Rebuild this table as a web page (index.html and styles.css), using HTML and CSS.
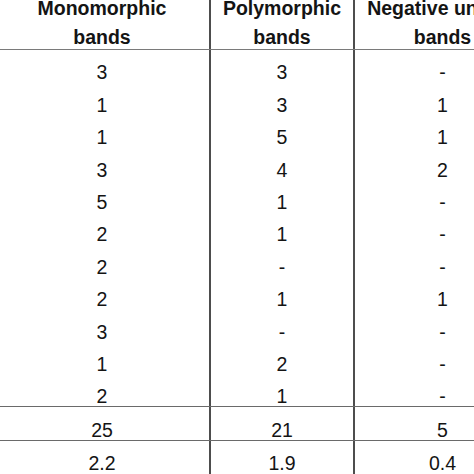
FILE: index.html
```html
<!DOCTYPE html>
<html>
<head>
<meta charset="utf-8">
<link rel="stylesheet" href="styles.css">
</head>
<body>
<div class="table">
  <div class="row head">
    <div class="cell">Monomorphic<br>bands</div>
    <div class="cell">Polymorphic<br>bands</div>
    <div class="cell">Negative unique<br>bands</div>
  </div>
  <div class="body">
    <div class="row"><div class="cell">3</div><div class="cell">3</div><div class="cell">-</div></div>
    <div class="row"><div class="cell">1</div><div class="cell">3</div><div class="cell">1</div></div>
    <div class="row"><div class="cell">1</div><div class="cell">5</div><div class="cell">1</div></div>
    <div class="row"><div class="cell">3</div><div class="cell">4</div><div class="cell">2</div></div>
    <div class="row"><div class="cell">5</div><div class="cell">1</div><div class="cell">-</div></div>
    <div class="row"><div class="cell">2</div><div class="cell">1</div><div class="cell">-</div></div>
    <div class="row"><div class="cell">2</div><div class="cell">-</div><div class="cell">-</div></div>
    <div class="row"><div class="cell">2</div><div class="cell">1</div><div class="cell">1</div></div>
    <div class="row"><div class="cell">3</div><div class="cell">-</div><div class="cell">-</div></div>
    <div class="row"><div class="cell">1</div><div class="cell">2</div><div class="cell">-</div></div>
    <div class="row"><div class="cell">2</div><div class="cell">1</div><div class="cell">-</div></div>
  </div>
  <div class="row total"><div class="cell">25</div><div class="cell">21</div><div class="cell">5</div></div>
  <div class="row mean"><div class="cell">2.2</div><div class="cell">1.9</div><div class="cell">0.4</div></div>
</div>
</body>
</html>
```
FILE: styles.css
```css
html, body {
  margin: 0;
  padding: 0;
  background: #ffffff;
  overflow: hidden;
}
body {
  width: 474px;
  height: 474px;
  font-family: "Liberation Sans", Arial, sans-serif;
  color: #141414;
}
.table {
  margin-left: -5px;
  margin-top: -6.25px;
  width: 535px;
}
.row {
  display: grid;
  grid-template-columns: 216px 144px 175px;
}
.cell {
  box-sizing: border-box;
  text-align: center;
  font-size: 19.5px;
  white-space: nowrap;
}
.cell:nth-child(1),
.cell:nth-child(2) {
  border-right: 2.5px solid #4d4d4d;
}
.head .cell {
  height: 55.25px;
  line-height: 29px;
  font-weight: bold;
}
.head {
  border-bottom: 1.5px solid #7a7a7a;
}
.body .cell,
.total .cell,
.mean .cell {
  height: 32.4px;
  padding-top: 12.4px;
  line-height: 20px;
}
.body {
  border-bottom: 1.5px solid #6a6a6a;
}
.total {
  border-bottom: 1.5px solid #6a6a6a;
}
.mean .cell {
  height: 40px;
}
```
